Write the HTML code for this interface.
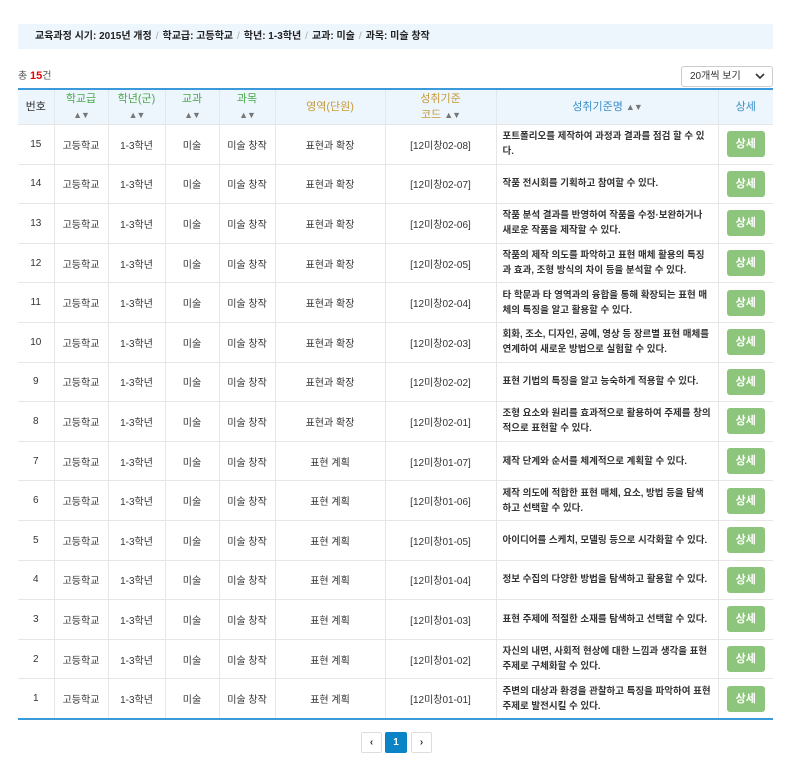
<!DOCTYPE html>
<html><head><meta charset="utf-8"><style>
body{margin:0;background:#fff;font-family:"Liberation Sans","Noto Sans CJK KR",sans-serif;font-size:10px;color:#333;width:800px;height:768px;overflow:hidden;position:relative}
.bar{position:absolute;left:18px;top:24px;width:755px;height:25px;background:#eef6fd;font-size:10px;font-weight:bold;color:#222;line-height:25px;box-sizing:border-box;padding-left:17px}
.bar span{color:#aaa;font-weight:normal;margin:0 4px}
.total{position:absolute;left:18px;top:67px;font-size:10px;color:#555}
.total b{color:#e00;font-size:11px}
.sel{position:absolute;left:681px;top:66px;width:92px;height:21px;border:1px solid #ccc;border-radius:3px;box-sizing:border-box;font-size:10px;line-height:19px;padding-left:8px;color:#333}
.sel svg{position:absolute;right:7px;top:6px}
table{position:absolute;left:18px;top:88px;width:755px;border-collapse:collapse;table-layout:fixed;border-top:2px solid #3b9ad9;border-bottom:2px solid #3b9ad9}
th{background:#eef6fd;height:34px;font-weight:normal;font-size:11px;line-height:16px;border-left:1px solid #e3e8ec;padding:0}
th:first-child,td:first-child{border-left:none}
td{height:38.6px;border-top:1px solid #e6e6e6;border-left:1px solid #e6e6e6;text-align:center;font-size:10px;color:#333;padding:0}
td.d{text-align:left;padding:0 6px;font-weight:bold;line-height:15px;color:#333;font-size:9.5px}
.g{color:#4aa84a}.y{color:#c49a3a}.b{color:#3b8fc9}
.ar{color:#777;font-size:9px;letter-spacing:-1px}
.btn{display:inline-block;width:38px;height:26px;line-height:26px;background:#8cc57b;color:#fff;font-weight:bold;border-radius:3px;font-size:11px}
.pg{position:absolute;top:732px;height:21px;width:21px;border:1px solid #ddd;box-sizing:border-box;border-radius:2px;text-align:center;line-height:19px;font-size:10px;font-weight:bold;color:#333}
</style></head><body>
<div class="bar">교육과정 시기: 2015년 개정<span>/</span>학교급: 고등학교<span>/</span>학년: 1-3학년<span>/</span>교과: 미술<span>/</span>과목: 미술 창작</div>
<div class="total">총 <b>15</b>건</div>
<div class="sel">20개씩 보기<svg width="10" height="7" viewBox="0 0 10 7"><path d="M1 1l4 4 4-4" stroke="#333" stroke-width="1.6" fill="none"/></svg></div>
<table>
<colgroup><col style="width:36px"><col style="width:54px"><col style="width:57px"><col style="width:54px"><col style="width:56px"><col style="width:110px"><col style="width:111px"><col style="width:222px"><col style="width:55px"></colgroup>
<tr><th>번호</th><th class="g">학교급<br><span class="ar">▲▼</span></th><th class="g">학년(군)<br><span class="ar">▲▼</span></th><th class="g">교과<br><span class="ar">▲▼</span></th><th class="g">과목<br><span class="ar">▲▼</span></th><th class="y">영역(단원)</th><th class="y">성취기준<br>코드 <span class="ar">▲▼</span></th><th class="b">성취기준명 <span class="ar">▲▼</span></th><th class="b">상세</th></tr>
<tr><td>15</td><td>고등학교</td><td>1-3학년</td><td>미술</td><td>미술 창작</td><td>표현과 확장</td><td>[12미창02-08]</td><td class="d">포트폴리오를 제작하여 과정과 결과를 점검 할 수 있다.</td><td><span class="btn">상세</span></td></tr>
<tr><td>14</td><td>고등학교</td><td>1-3학년</td><td>미술</td><td>미술 창작</td><td>표현과 확장</td><td>[12미창02-07]</td><td class="d">작품 전시회를 기획하고 참여할 수 있다.</td><td><span class="btn">상세</span></td></tr>
<tr><td>13</td><td>고등학교</td><td>1-3학년</td><td>미술</td><td>미술 창작</td><td>표현과 확장</td><td>[12미창02-06]</td><td class="d">작품 분석 결과를 반영하여 작품을 수정·보완하거나 새로운 작품을 제작할 수 있다.</td><td><span class="btn">상세</span></td></tr>
<tr><td>12</td><td>고등학교</td><td>1-3학년</td><td>미술</td><td>미술 창작</td><td>표현과 확장</td><td>[12미창02-05]</td><td class="d">작품의 제작 의도를 파악하고 표현 매체 활용의 특징과 효과, 조형 방식의 차이 등을 분석할 수 있다.</td><td><span class="btn">상세</span></td></tr>
<tr><td>11</td><td>고등학교</td><td>1-3학년</td><td>미술</td><td>미술 창작</td><td>표현과 확장</td><td>[12미창02-04]</td><td class="d">타 학문과 타 영역과의 융합을 통해 확장되는 표현 매체의 특징을 알고 활용할 수 있다.</td><td><span class="btn">상세</span></td></tr>
<tr><td>10</td><td>고등학교</td><td>1-3학년</td><td>미술</td><td>미술 창작</td><td>표현과 확장</td><td>[12미창02-03]</td><td class="d">회화, 조소, 디자인, 공예, 영상 등 장르별 표현 매체를 연계하여 새로운 방법으로 실험할 수 있다.</td><td><span class="btn">상세</span></td></tr>
<tr><td>9</td><td>고등학교</td><td>1-3학년</td><td>미술</td><td>미술 창작</td><td>표현과 확장</td><td>[12미창02-02]</td><td class="d">표현 기법의 특징을 알고 능숙하게 적용할 수 있다.</td><td><span class="btn">상세</span></td></tr>
<tr><td>8</td><td>고등학교</td><td>1-3학년</td><td>미술</td><td>미술 창작</td><td>표현과 확장</td><td>[12미창02-01]</td><td class="d">조형 요소와 원리를 효과적으로 활용하여 주제를 창의적으로 표현할 수 있다.</td><td><span class="btn">상세</span></td></tr>
<tr><td>7</td><td>고등학교</td><td>1-3학년</td><td>미술</td><td>미술 창작</td><td>표현 계획</td><td>[12미창01-07]</td><td class="d">제작 단계와 순서를 체계적으로 계획할 수 있다.</td><td><span class="btn">상세</span></td></tr>
<tr><td>6</td><td>고등학교</td><td>1-3학년</td><td>미술</td><td>미술 창작</td><td>표현 계획</td><td>[12미창01-06]</td><td class="d">제작 의도에 적합한 표현 매체, 요소, 방법 등을 탐색하고 선택할 수 있다.</td><td><span class="btn">상세</span></td></tr>
<tr><td>5</td><td>고등학교</td><td>1-3학년</td><td>미술</td><td>미술 창작</td><td>표현 계획</td><td>[12미창01-05]</td><td class="d">아이디어를 스케치, 모델링 등으로 시각화할 수 있다.</td><td><span class="btn">상세</span></td></tr>
<tr><td>4</td><td>고등학교</td><td>1-3학년</td><td>미술</td><td>미술 창작</td><td>표현 계획</td><td>[12미창01-04]</td><td class="d">정보 수집의 다양한 방법을 탐색하고 활용할 수 있다.</td><td><span class="btn">상세</span></td></tr>
<tr><td>3</td><td>고등학교</td><td>1-3학년</td><td>미술</td><td>미술 창작</td><td>표현 계획</td><td>[12미창01-03]</td><td class="d">표현 주제에 적절한 소재를 탐색하고 선택할 수 있다.</td><td><span class="btn">상세</span></td></tr>
<tr><td>2</td><td>고등학교</td><td>1-3학년</td><td>미술</td><td>미술 창작</td><td>표현 계획</td><td>[12미창01-02]</td><td class="d">자신의 내면, 사회적 현상에 대한 느낌과 생각을 표현 주제로 구체화할 수 있다.</td><td><span class="btn">상세</span></td></tr>
<tr><td>1</td><td>고등학교</td><td>1-3학년</td><td>미술</td><td>미술 창작</td><td>표현 계획</td><td>[12미창01-01]</td><td class="d">주변의 대상과 환경을 관찰하고 특징을 파악하여 표현 주제로 발전시킬 수 있다.</td><td><span class="btn">상세</span></td></tr>
</table>
<div class="pg" style="left:361px">‹</div>
<div class="pg" style="left:385px;width:22px;background:#0a84c6;border-color:#0a84c6;color:#fff">1</div>
<div class="pg" style="left:411px">›</div>
</body></html>
